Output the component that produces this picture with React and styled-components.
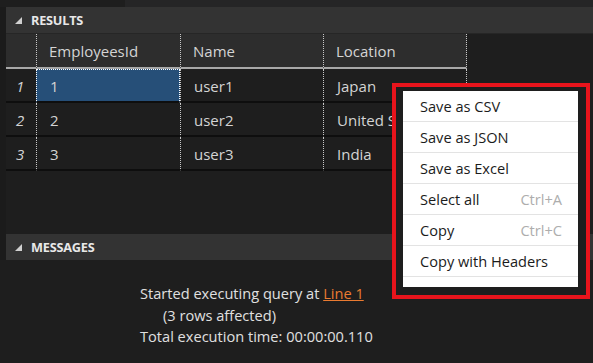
import styled, { createGlobalStyle } from "styled-components";

const GlobalStyle = createGlobalStyle`
  html, body {
    margin: 0;
    padding: 0;
    background: #1e1e1e;
    font-family: "Open Sans", "Noto Sans", sans-serif;
  }
  #root {
    width: 593px;
    height: 363px;
    overflow: hidden;
  }
`;

const Screen = styled.div`
  position: relative;
  width: 593px;
  height: 363px;
  background: #1e1e1e;
  color: #d4d4d4;
`;

const TopStrip = styled.div`
  display: flex;
  height: 7px;
  .left {
    width: 125px;
    background: #1e1e1e;
  }
  .right {
    flex: 1;
    background: #252526;
  }
`;

const Workspace = styled.div`
  display: flex;
`;

const Gutter = styled.div`
  width: 6px;
  background: #1b1b1b;
`;

const Panes = styled.div`
  flex: 1;
  display: flex;
  flex-direction: column;
`;

const SectionHeader = styled.div`
  display: flex;
  align-items: center;
  gap: 9px;
  height: ${({ $h }) => $h}px;
  padding-left: 9px;
  background: #333333;
  color: #e8e8e8;
  font-weight: 700;
  font-size: 12.7px;
  letter-spacing: -0.2px;
  border-bottom: ${({ $line }) => ($line ? "1px solid #262626" : "none")};
  box-sizing: border-box;
`;

const GridArea = styled.div`
  height: 200px;
  background: #1e1e1e;
`;

const Table = styled.div`
  display: grid;
  grid-template-columns: 30px 144px 143px 144px;
  width: 461px;
  font-size: 15px;
  color: #d4d4d4;
`;

const HeadCell = styled.div`
  height: 35px;
  display: flex;
  align-items: center;
  padding: 1px 0 0 12px;
  box-sizing: border-box;
  background: #2d2d2d;
  border-bottom: 2px solid #a8a8a8;
  border-left: ${({ $first }) => ($first ? "none" : "1px dotted #c8c8c8")};
  border-right: ${({ $last }) => ($last ? "1px dotted #c8c8c8" : "none")};
`;

const Cell = styled.div`
  height: 34px;
  box-sizing: border-box;
  display: flex;
  align-items: center;
  padding: 1px 0 0 ${({ $num }) => ($num ? 10 : 13)}px;
  font-style: ${({ $num }) => ($num ? "italic" : "normal")};
  white-space: nowrap;
  overflow: hidden;
  background: ${({ $selected }) => ($selected ? "#264f78" : "transparent")};
  border-bottom: 2px solid #0e0e0e;
  border-top: ${({ $selected }) => ($selected ? "1px dotted #ffffff" : "none")};
  border-left: ${({ $num, $selected }) =>
    $num ? "none" : $selected ? "1px dotted #ffffff" : "1px dotted #c8c8c8"};
  border-right: ${({ $last, $selected }) =>
    $selected ? "1px dotted #ffffff" : $last ? "1px dotted #c8c8c8" : "none"};
`;

const MessagesBody = styled.div`
  display: flex;
  flex-direction: column;
  padding: 23px 0 0 140px;
  font-size: 14.6px;
  line-height: 21.5px;
  color: #e0e0e0;
  a {
    color: #ea7b31;
    text-decoration: underline;
  }
  .indent {
    padding-left: 23px;
  }
`;

const MenuFrame = styled.div`
  position: absolute;
  left: 392px;
  top: 83px;
  width: 198px;
  height: 216px;
  box-sizing: border-box;
  border: 4px solid #e8141c;
  padding: 4px 8px 8px 7px;
  background: #1e1e1e;
`;

const Menu = styled.ul`
  list-style: none;
  margin: 0;
  padding: 0 0 10px 0;
  background: #ffffff;
  color: #1b1b1b;
  font-size: 14.6px;
  height: 100%;
  box-sizing: border-box;
`;

const MenuItem = styled.li`
  display: flex;
  align-items: center;
  justify-content: space-between;
  height: 31px;
  box-sizing: border-box;
  padding: 0 16px 0 17px;
  border-bottom: 1px solid #e3e3e3;
  span.key {
    color: #adadad;
  }
`;

const Twistie = () => (
  <svg width="7" height="7" viewBox="0 0 7 7">
    <polygon points="7,0 7,7 0,7" fill="#d0d0d0" />
  </svg>
);

const columns = ["EmployeesId", "Name", "Location"];
const rows = [
  ["1", "user1", "Japan"],
  ["2", "user2", "United States"],
  ["3", "user3", "India"],
];

const menuItems = [
  { label: "Save as CSV" },
  { label: "Save as JSON" },
  { label: "Save as Excel" },
  { label: "Select all", key: "Ctrl+A" },
  { label: "Copy", key: "Ctrl+C" },
  { label: "Copy with Headers" },
];

export default function App() {
  return (
    <Screen>
      <GlobalStyle />
      <TopStrip>
        <div className="left" />
        <div className="right" />
      </TopStrip>
      <Workspace>
        <Gutter />
        <Panes>
          <SectionHeader $h={27} $line>
            <Twistie />
            RESULTS
          </SectionHeader>
          <GridArea>
            <Table>
              <HeadCell $first />
              {columns.map((c, i) => (
                <HeadCell key={c} $last={i === columns.length - 1}>
                  {c}
                </HeadCell>
              ))}
              {rows.map((r, ri) => [
                <Cell key={`n${ri}`} $num>
                  {ri + 1}
                </Cell>,
                ...r.map((v, ci) => (
                  <Cell
                    key={`${ri}-${ci}`}
                    $selected={ri === 0 && ci === 0}
                    $last={ci === r.length - 1}
                  >
                    {v}
                  </Cell>
                )),
              ])}
            </Table>
          </GridArea>
          <SectionHeader $h={26}>
            <Twistie />
            MESSAGES
          </SectionHeader>
        </Panes>
      </Workspace>
      <MessagesBody>
        <div>
          Started executing query at <a>Line 1</a>
        </div>
        <div className="indent">(3 rows affected)</div>
        <div>Total execution time: 00:00:00.110</div>
      </MessagesBody>
      <MenuFrame>
        <Menu>
          {menuItems.map((m) => (
            <MenuItem key={m.label}>
              <span>{m.label}</span>
              {m.key && <span className="key">{m.key}</span>}
            </MenuItem>
          ))}
        </Menu>
      </MenuFrame>
    </Screen>
  );
}
